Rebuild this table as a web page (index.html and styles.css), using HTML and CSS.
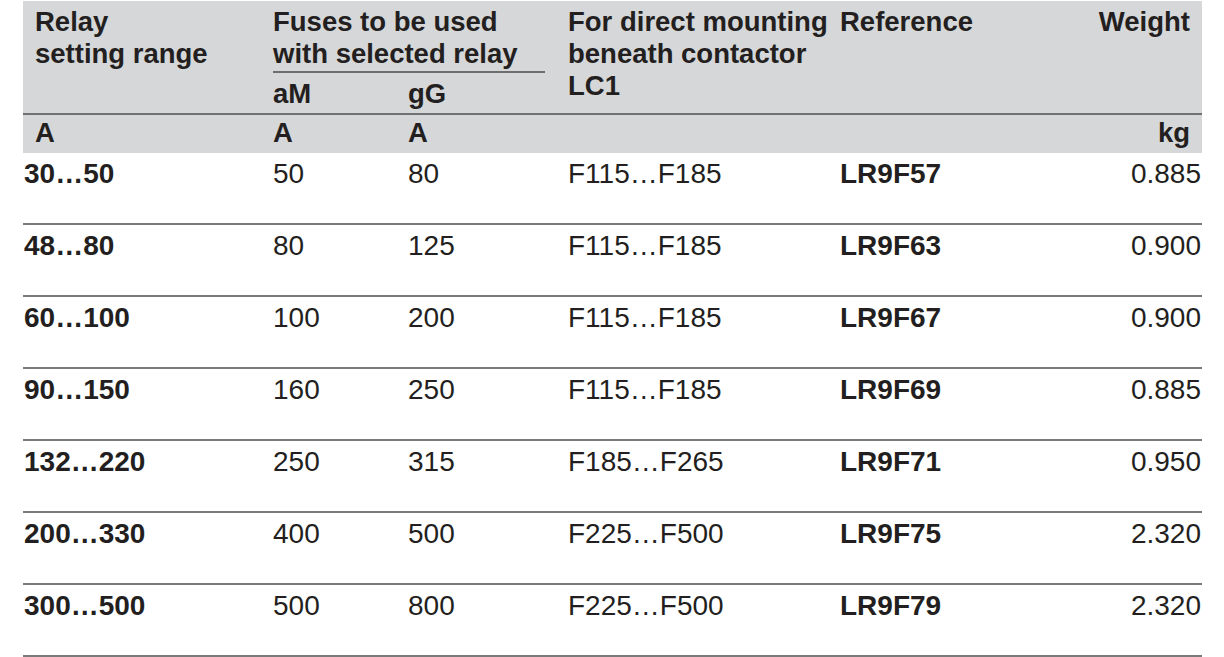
FILE: index.html
```html
<!DOCTYPE html>
<html>
<head>
<meta charset="utf-8">
<link rel="stylesheet" href="styles.css">
</head>
<body>
<div class="sheet">
  <div class="head">
    <div class="h h-relay">Relay<br>setting range</div>
    <div class="h h-fuses"><span class="fuse-title">Fuses to be used<br>with selected relay</span></div>
    <div class="h h-am">aM</div>
    <div class="h h-gg">gG</div>
    <div class="h h-mount">For direct mounting<br>beneath contactor<br>LC1</div>
    <div class="h h-ref">Reference</div>
    <div class="h h-weight">Weight</div>
  </div>
  <div class="units">
    <div class="u u-first">A</div>
    <div class="u">A</div>
    <div class="u">A</div>
    <div class="u"></div>
    <div class="u"></div>
    <div class="u u-last">kg</div>
  </div>
  <div class="row"><div class="c c-range">30…50</div><div class="c">50</div><div class="c">80</div><div class="c">F115…F185</div><div class="c c-ref">LR9F57</div><div class="c c-w">0.885</div></div>
  <div class="row"><div class="c c-range">48…80</div><div class="c">80</div><div class="c">125</div><div class="c">F115…F185</div><div class="c c-ref">LR9F63</div><div class="c c-w">0.900</div></div>
  <div class="row"><div class="c c-range">60…100</div><div class="c">100</div><div class="c">200</div><div class="c">F115…F185</div><div class="c c-ref">LR9F67</div><div class="c c-w">0.900</div></div>
  <div class="row"><div class="c c-range">90…150</div><div class="c">160</div><div class="c">250</div><div class="c">F115…F185</div><div class="c c-ref">LR9F69</div><div class="c c-w">0.885</div></div>
  <div class="row"><div class="c c-range">132…220</div><div class="c">250</div><div class="c">315</div><div class="c">F185…F265</div><div class="c c-ref">LR9F71</div><div class="c c-w">0.950</div></div>
  <div class="row"><div class="c c-range">200…330</div><div class="c">400</div><div class="c">500</div><div class="c">F225…F500</div><div class="c c-ref">LR9F75</div><div class="c c-w">2.320</div></div>
  <div class="row"><div class="c c-range">300…500</div><div class="c">500</div><div class="c">800</div><div class="c">F225…F500</div><div class="c c-ref">LR9F79</div><div class="c c-w">2.320</div></div>
</div>
</body>
</html>
```
FILE: styles.css
```css
html, body {
  margin: 0;
  padding: 0;
  background: #ffffff;
}
body {
  font-family: "Liberation Sans", Arial, sans-serif;
  color: #231f20;
}
.sheet {
  margin: 1px 0 0 23px;
  width: 1179px;
}
.head, .units, .row {
  display: grid;
  grid-template-columns: 250px 135px 160px 272px 1fr 120px;
}
.head {
  background: #d6d7d9;
  grid-template-rows: auto auto;
  padding: 5px 0 3px;
  border-bottom: 2px solid #707070;
}
.h {
  font-size: 27.5px;
  font-weight: bold;
  line-height: 32px;
}
.h-relay { grid-column: 1; grid-row: 1 / 3; padding-left: 12px; }
.h-fuses { grid-column: 2 / 4; grid-row: 1; }
.fuse-title {
  display: block;
  width: 272px;
  padding-bottom: 1px;
  border-bottom: 2px solid #6e6e6e;
}
.h-am { grid-column: 2; grid-row: 2; margin-top: 5px; }
.h-gg { grid-column: 3; grid-row: 2; margin-top: 5px; }
.h-mount { grid-column: 4; grid-row: 1 / 3; }
.h-ref { grid-column: 5; grid-row: 1 / 3; }
.h-weight { grid-column: 6; grid-row: 1 / 3; text-align: right; padding-right: 12px; }
.units {
  background: #d6d7d9;
  padding: 2px 0 4px;
}
.u {
  font-size: 27.5px;
  font-weight: bold;
  line-height: 32px;
  height: 32px;
}
.u-first { padding-left: 12px; }
.u-last { text-align: right; padding-right: 12px; }
.row {
  height: 70px;
  border-bottom: 2px solid #7a7a7a;
}
.c {
  font-size: 28px;
  line-height: 30px;
  padding-top: 6px;
}
.c-range { font-weight: bold; padding-left: 1px; }
.c-ref { font-weight: bold; }
.c-w { text-align: right; padding-right: 1px; }
```
